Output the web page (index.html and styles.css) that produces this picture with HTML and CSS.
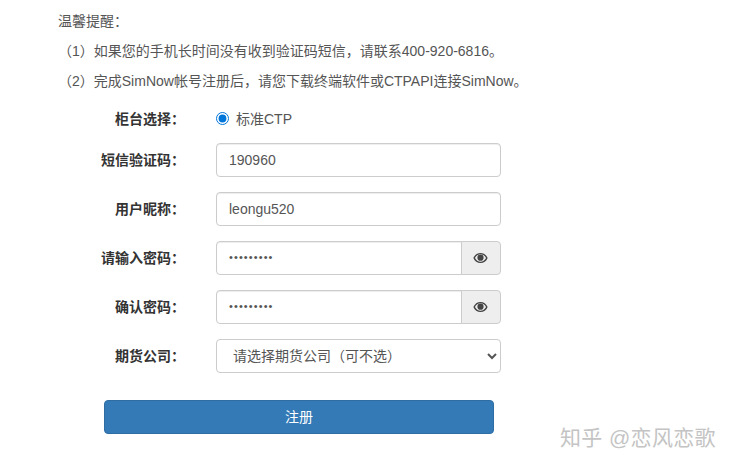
FILE: index.html
```html
<!DOCTYPE html>
<html lang="zh-CN">
<head>
<meta charset="utf-8">
<title>SimNow 注册</title>
<link rel="stylesheet" href="styles.css">
</head>
<body>
<main class="page">
  <section class="notes">
    <p class="note-title">温馨提醒：</p>
    <p class="note">（1）如果您的手机长时间没有收到验证码短信，请联系400-920-6816。</p>
    <p class="note">（2）完成SimNow帐号注册后，请您下载终端软件或CTPAPI连接SimNow。</p>
  </section>
  <form class="form">
    <div class="row row-radio">
      <label class="label">柜台选择：</label>
      <label class="radio"><input type="radio" name="ctp" checked><span>标准CTP</span></label>
    </div>
    <div class="row">
      <label class="label">短信验证码：</label>
      <input class="control" type="text" value="190960">
    </div>
    <div class="row">
      <label class="label">用户昵称：</label>
      <input class="control" type="text" value="leongu520">
    </div>
    <div class="row">
      <label class="label">请输入密码：</label>
      <div class="group">
        <input class="control joined secret" type="password" value="123456789">
        <span class="addon"><svg class="eye" viewBox="0 0 16 12"><path fill-rule="evenodd" d="M8 .6C4.6.6 1.8 2.6.4 6c1.400 3.400 4.200 5.400 7.600 5.400s6.200-2 7.600-5.400C14.200 2.600 11.400.6 8 .6zM8 2.100c2.500 0 4.600 1.400 5.900 3.900-1.300 2.500-3.400 3.900-5.900 3.900S3.400 8.500 2.100 6C3.400 3.500 5.500 2.100 8 2.100z"/><circle cx="8" cy="5.600" r="3.300"/></svg></span>
      </div>
    </div>
    <div class="row">
      <label class="label">确认密码：</label>
      <div class="group">
        <input class="control joined secret" type="password" value="123456789">
        <span class="addon"><svg class="eye" viewBox="0 0 16 12"><path fill-rule="evenodd" d="M8 .6C4.6.6 1.8 2.6.4 6c1.400 3.400 4.200 5.400 7.600 5.400s6.200-2 7.600-5.400C14.200 2.600 11.400.6 8 .6zM8 2.100c2.500 0 4.600 1.400 5.900 3.900-1.300 2.500-3.400 3.900-5.900 3.900S3.400 8.500 2.100 6C3.400 3.500 5.500 2.100 8 2.100z"/><circle cx="8" cy="5.600" r="3.300"/></svg></span>
      </div>
    </div>
    <div class="row">
      <label class="label">期货公司：</label>
      <select class="control select"><option>请选择期货公司（可不选）</option></select>
    </div>
    <button class="submit" type="button">注册</button>
  </form>
</main>
<div class="watermark">知乎 @恋风恋歌</div>
</body>
</html>
```

FILE: styles.css
```css
* { box-sizing: border-box; }
html, body { margin: 0; height: 100%; background: #fff; overflow: hidden; }
body {
  font-family: "Liberation Sans", "Noto Sans CJK SC", sans-serif;
  font-size: 14px;
  color: #555;
}
.page { padding-top: 6px; }
.notes { padding-left: 58px; }
.note-title, .note { margin: 0; line-height: 30px; height: 30px; }
.form { margin-top: 12px; }
.row {
  display: grid;
  grid-template-columns: 185px 285px;
  column-gap: 31px;
  align-items: center;
  height: 34px;
  margin-bottom: 15px;
}
.row-radio { height: 20px; }
.label { text-align: right; font-weight: 700; color: #333; padding-bottom: 2px; }
.radio { display: flex; align-items: center; gap: 7px; color: #555; padding-bottom: 2px; }
.radio input { margin: 0; width: 13px; height: 13px; accent-color: #0075d9; }
.control {
  width: 100%;
  height: 34px;
  padding: 6px 12px;
  border: 1px solid #ccc;
  border-radius: 4px;
  font: inherit;
  color: #555;
  background: #fff;
  box-shadow: inset 0 1px 1px rgba(0,0,0,.075);
}
.secret { font-size: 11px; letter-spacing: 1.1px; padding-bottom: 8px; }
.select { box-shadow: none; }
.group { display: flex; }
.joined { flex: 1; min-width: 0; border-radius: 4px 0 0 4px; }
.addon {
  display: flex;
  align-items: center;
  justify-content: center;
  width: 40px;
  height: 34px;
  flex: none;
  padding-right: 2px;
  background: #eee;
  border: 1px solid #ccc;
  border-radius: 0 4px 4px 0;
  margin-left: -1px;
}
.eye { width: 15px; height: 12px; fill: #444; }
.submit {
  display: block;
  width: 390px;
  height: 34px;
  margin: 27px 0 0 104px;
  padding: 0 0 2px;
  border: 1px solid #2e6da4;
  border-radius: 4px;
  background: #337ab7;
  color: #fff;
  font: inherit;
}
.watermark {
  position: absolute;
  left: 560px;
  top: 425px;
  font-size: 21px;
  letter-spacing: .35px;
  line-height: 26px;
  color: #c4c4c4;
  white-space: nowrap;
}
```
